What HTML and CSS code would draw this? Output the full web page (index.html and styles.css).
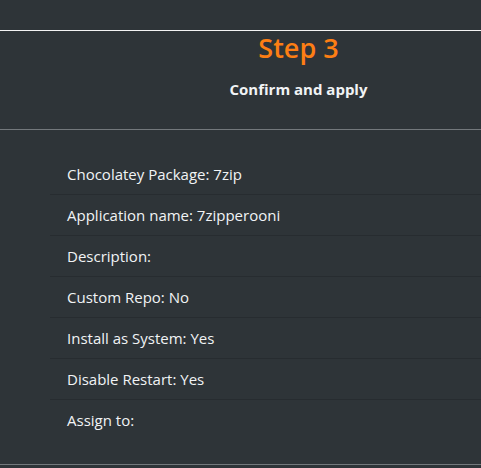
FILE: index.html
```html
<!DOCTYPE html>
<html lang="en">
<head>
<meta charset="utf-8">
<title>Step 3</title>
<link rel="stylesheet" href="styles.css">
</head>
<body>
<div class="page">
  <header class="step-header">
    <h2 class="step-title">Step 3</h2>
    <p class="step-subtitle">Confirm and apply</p>
  </header>
  <hr class="rule">
  <ul class="summary">
    <li class="summary-item">Chocolatey Package: 7zip</li>
    <li class="summary-item">Application name: 7zipperooni</li>
    <li class="summary-item">Description:</li>
    <li class="summary-item">Custom Repo: No</li>
    <li class="summary-item">Install as System: Yes</li>
    <li class="summary-item">Disable Restart: Yes</li>
    <li class="summary-item">Assign to:</li>
  </ul>
  <hr class="rule">
</div>
</body>
</html>
```
FILE: styles.css
```css
html, body {
  margin: 0;
  padding: 0;
  background: #2e3438;
  overflow: hidden;
}
body {
  font-family: "Open Sans", "Noto Sans", sans-serif;
  color: #f1f3f5;
}
.page {
  padding-top: 30px;
}
.step-header {
  border-top: 1px solid #f4f4f4;
  padding: 0 0 28px 116px;
  text-align: center;
}
.step-title {
  margin: 0;
  font-size: 27px;
  line-height: 34px;
  font-weight: 600;
  color: #fd7e14;
}
.step-subtitle {
  margin: 12px 0 0;
  font-size: 15px;
  line-height: 24px;
  font-weight: 700;
}
.rule {
  margin: 0;
  border: 0;
  border-top: 1px solid #73787c;
  height: 0;
}
.summary {
  list-style: none;
  margin: 24px 0 24px 50px;
  padding: 0;
}
.summary-item {
  padding: 8px 16px 8px 17px;
  font-size: 15px;
  line-height: 24px;
  border-bottom: 1px solid #272c30;
}
.summary-item:last-child {
  border-bottom: 0;
}
```
